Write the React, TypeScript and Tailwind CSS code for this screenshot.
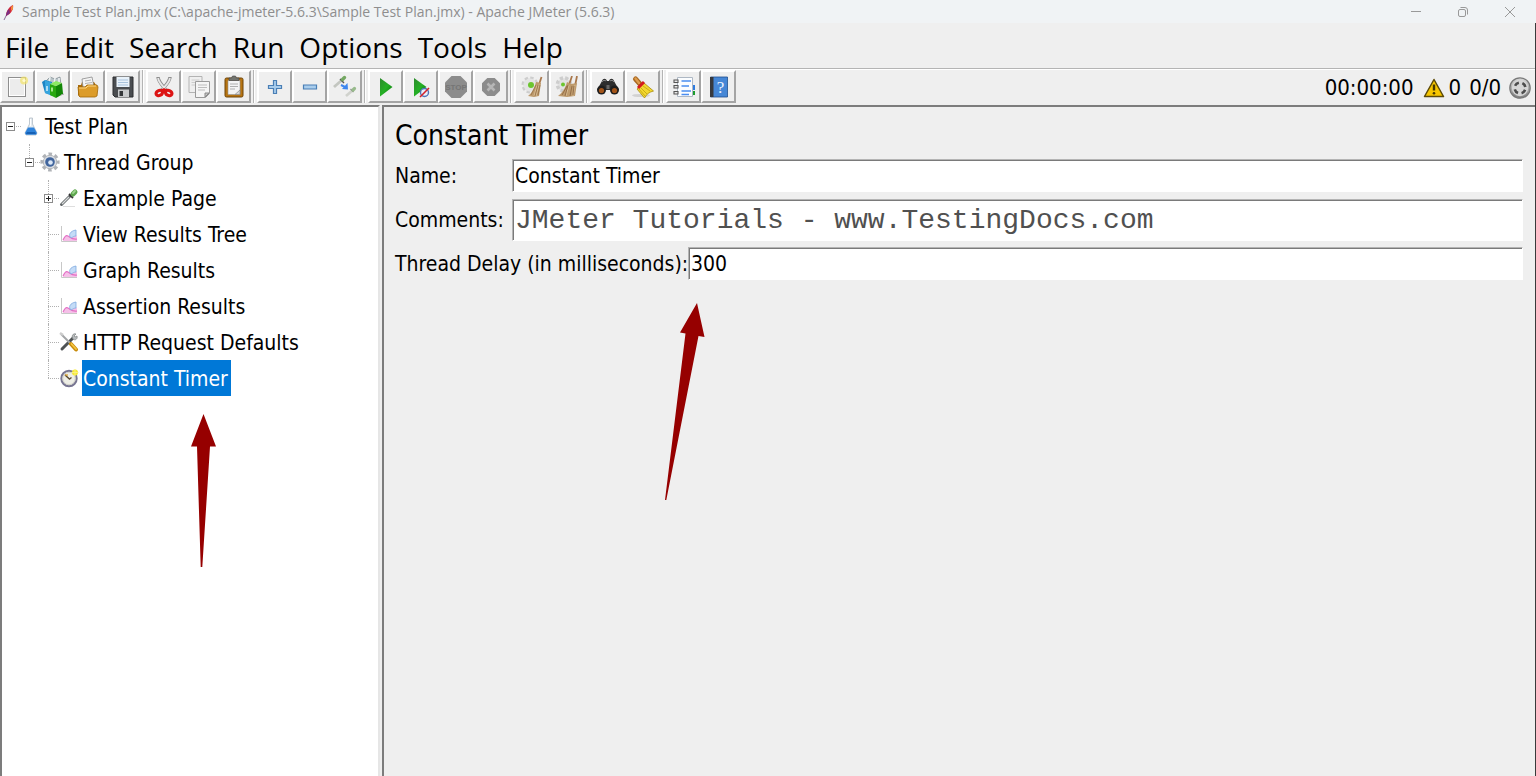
import type { ReactNode } from 'react';
import clsx from 'clsx';

type TreeRow = {
  label: string;
  level: number;
  icon: ReactNode;
  expander?: 'open' | 'closed';
  last?: boolean;
  selected?: boolean;
};

type ToolItem = { name: string; icon: ReactNode };

const menus = ['File', 'Edit', 'Search', 'Run', 'Options', 'Tools', 'Help'];

const treeRows: TreeRow[] = [
  { label: 'Test Plan', level: 0, icon: <FlaskIcon />, expander: 'open' },
  { label: 'Thread Group', level: 1, icon: <GearIcon />, expander: 'open', last: true },
  { label: 'Example Page', level: 2, icon: <DropperIcon />, expander: 'closed' },
  { label: 'View Results Tree', level: 2, icon: <ChartIcon /> },
  { label: 'Graph Results', level: 2, icon: <ChartIcon /> },
  { label: 'Assertion Results', level: 2, icon: <ChartIcon /> },
  { label: 'HTTP Request Defaults', level: 2, icon: <ToolsIcon /> },
  { label: 'Constant Timer', level: 2, icon: <ClockIcon />, last: true, selected: true },
];

const indents = ['pl-1', 'pl-[23px]', 'pl-[42px]'];

const toolGroups: ToolItem[][] = [
  [
    { name: 'New', icon: <NewIcon /> },
    { name: 'Templates', icon: <TemplatesIcon /> },
    { name: 'Open', icon: <OpenIcon /> },
    { name: 'Save', icon: <SaveIcon /> },
  ],
  [
    { name: 'Cut', icon: <CutIcon /> },
    { name: 'Copy', icon: <CopyIcon /> },
    { name: 'Paste', icon: <PasteIcon /> },
  ],
  [
    { name: 'Expand All', icon: <PlusIcon /> },
    { name: 'Collapse All', icon: <MinusIcon /> },
    { name: 'Toggle', icon: <ToggleIcon /> },
  ],
  [
    { name: 'Start', icon: <StartIcon /> },
    { name: 'Start no pauses', icon: <StartNoPauseIcon /> },
    { name: 'Stop', icon: <StopIcon /> },
    { name: 'Shutdown', icon: <ShutdownIcon /> },
  ],
  [
    { name: 'Clear', icon: <ClearIcon /> },
    { name: 'Clear All', icon: <ClearAllIcon /> },
  ],
  [
    { name: 'Search', icon: <BinocularsIcon /> },
    { name: 'Reset Search', icon: <BroomIcon /> },
  ],
  [
    { name: 'Function Helper', icon: <ListIcon /> },
    { name: 'Help', icon: <HelpIcon /> },
  ],
];

export default function App() {
  return (
    <div className="flex min-h-screen flex-col overflow-hidden bg-[#efefef] font-['DejaVu_Sans_Condensed','Noto_Sans',sans-serif] text-black">
      <TitleBar />
      <div className="flex flex-1 flex-col border-r border-[#3a3a3a]">
        <nav className="flex h-[46px] items-center gap-[15px] border-b border-[#b4b4b4] pt-[2px] pl-[5px] font-['Open_Sans',sans-serif] text-[28px]">
          {menus.map((m) => (
            <button key={m} type="button">
              {m}
            </button>
          ))}
        </nav>
        <Toolbar />
        <div className="flex flex-1">
          <TestTree />
          <TimerPanel />
        </div>
      </div>
    </div>
  );
}

function TitleBar() {
  return (
    <header className="flex h-[23px] items-center justify-between bg-[#f0f3f5] text-[#8e8e8e]">
      <div className="flex items-center gap-[6px] pl-[2px] font-['Open_Sans',sans-serif] text-[14px]">
        <svg width="14" height="18" viewBox="0 0 14 18">
          <path d="M2 17 5 11" stroke="#8a6a9a" strokeWidth="1" />
          <path d="M4 13C4 8 7 4 11 2c1 4-2 9-7 11Z" fill="#d22a3c" />
          <path d="M4 13C4 10 5 8 7 6l1 4c-1 1-2 2-4 3Z" fill="#7b2f86" />
          <path d="M9 4l2-2v4l-2 2Z" fill="#f08a3c" />
        </svg>
        <span>Sample Test Plan.jmx (C:\apache-jmeter-5.6.3\Sample Test Plan.jmx) - Apache JMeter (5.6.3)</span>
      </div>
      <div className="flex gap-[35px] pr-5">
        <button type="button" aria-label="Minimize">
          <svg width="12" height="12" viewBox="0 0 12 12" stroke="#999" fill="none">
            <path d="M1 5.500h10" />
          </svg>
        </button>
        <button type="button" aria-label="Restore">
          <svg width="12" height="12" viewBox="0 0 12 12" stroke="#999" fill="none">
            <rect x="1.500" y="3.500" width="7" height="7" rx="1.500" />
            <path d="M3.500 1.500H8a2.500 2.500 0 0 1 2.500 2.500v4.500" />
          </svg>
        </button>
        <button type="button" aria-label="Close">
          <svg width="12" height="12" viewBox="0 0 12 12" stroke="#999" fill="none">
            <path d="m1 1 10 10M11 1 1 11" />
          </svg>
        </button>
      </div>
    </header>
  );
}

function Toolbar() {
  return (
    <div className="flex h-[36px] items-start justify-between border-t border-white pr-1">
      <div className="flex gap-[6px]">
        {toolGroups.map((group, i) => (
          <div
            key={i}
            className="relative flex after:absolute after:top-0 after:-right-[4px] after:h-[33px] after:w-[2px] after:border-l after:border-[#b4b4b4] after:bg-white last:after:hidden"
          >
            {group.map((t) => (
              <button
                key={t.name}
                type="button"
                aria-label={t.name}
                className="flex h-[33px] w-[35px] items-center justify-center border-t-2 border-r-2 border-b-2 border-l-2 border-t-white border-r-[#a4a4a4] border-b-[#a4a4a4] border-l-white"
              >
                {t.icon}
              </button>
            ))}
          </div>
        ))}
      </div>
      <div className="flex items-center pt-[2px] text-[22px] leading-8">
        <span>00:00:00</span>
        <button type="button" aria-label="Show log" className="ml-[9px] flex items-center gap-1">
          <svg width="22" height="20" viewBox="0 0 22 20">
            <path d="M11 1.500 20.500 18.500h-19Z" fill="#f7c600" stroke="#5c4a08" strokeWidth="1.500" strokeLinejoin="round" />
            <path d="M11 6.500v6" stroke="#4a3900" strokeWidth="2.400" />
            <circle cx="11" cy="15.300" r="1.300" fill="#4a3900" />
          </svg>
          0
        </button>
        <span className="mr-[8px] ml-[8px]">0/0</span>
        <svg width="22" height="22" viewBox="0 0 22 22">
          <defs>
            <linearGradient id="ball" x1="0" y1="0" x2="0" y2="1">
              <stop offset="0" stopColor="#d8d8d8" />
              <stop offset="1" stopColor="#7e7e7e" />
            </linearGradient>
          </defs>
          <circle cx="11" cy="11" r="10.200" fill="url(#ball)" stroke="#777" strokeWidth="1.200" />
          <circle cx="11" cy="11" r="8.200" fill="#d6d6d6" />
          <circle cx="11" cy="11" r="5.400" fill="none" stroke="#4c4c4c" strokeWidth="2.600" strokeDasharray="4.800 3.682" strokeDashoffset="-1.841" />
        </svg>
      </div>
    </div>
  );
}

function TestTree() {
  return (
    <aside className="w-[380px] shrink-0 border-t-2 border-r-2 border-l-2 border-t-[#7c7c7c] border-r-[#e6e6e6] border-l-[#7c7c7c] bg-white pt-px">
      <ul>
        {treeRows.map((row) => (
          <li key={row.label} className={clsx('flex h-9 items-center text-[21px]', indents[row.level])}>
            <span className="relative flex h-9 w-[15px] shrink-0 items-center">
              {row.level > 0 && (
                <span
                  className={clsx(
                    'absolute top-0 left-1 border-l border-dotted border-[#b0b0b0]',
                    row.last ? 'h-[18px]' : 'h-9',
                  )}
                />
              )}
              <span className="absolute top-[18px] right-0 left-1 border-t border-dotted border-[#b0b0b0]" />
              {row.expander && (
                <button
                  type="button"
                  aria-label={row.expander === 'open' ? `Collapse ${row.label}` : `Expand ${row.label}`}
                  className="relative bg-white"
                >
                  <svg width="9" height="9" viewBox="0 0 9 9" fill="none">
                    <rect x=".5" y=".5" width="8" height="8" stroke="#8c8c8c" />
                    <path d={row.expander === 'open' ? 'M2 4.500h5' : 'M2 4.500h5M4.500 2v5'} stroke="#222" />
                  </svg>
                </button>
              )}
            </span>
            <span className="flex w-5 shrink-0 justify-center">{row.icon}</span>
            <button
              type="button"
              className={clsx(
                'ml-[3px] h-9 pt-[3px] pr-[3px] pl-px whitespace-nowrap',
                row.selected && 'bg-[#0078d7] text-white',
              )}
            >
              {row.label}
            </button>
          </li>
        ))}
      </ul>
      <svg className="pointer-events-none absolute top-[414px] left-[190px]" width="28" height="154" viewBox="0 0 28 154">
        <path d="M13.500 0 26 32.500H20L12.300 153h-1.600L7 32.500H1Z" fill="#960000" />
      </svg>
    </aside>
  );
}

const field =
  'min-w-0 flex-1 border border-t-[#b4b4b4] border-r-white border-b-white border-l-[#b4b4b4] bg-white pt-[2px] pl-[2px] shadow-[inset_1px_1px_#7a7a7a] outline-none';

function TimerPanel() {
  return (
    <main className="ml-[2px] min-w-0 flex-1 border-t-2 border-l-2 border-[#7c7c7c] pt-[10px] pr-3 pl-[11px] text-[21px]">
      <h1 className="h-[42px] text-[28px] leading-[38px]">Constant Timer</h1>
      <div className="flex h-[33px] items-stretch">
        <label htmlFor="name" className="w-[117px] shrink-0 self-center pt-[2px]">
          Name:
        </label>
        <input id="name" className={field} defaultValue="Constant Timer" />
      </div>
      <div className="mt-[7px] flex h-[42px] items-stretch">
        <label htmlFor="comments" className="w-[117px] shrink-0 self-center pt-[2px]">
          Comments:
        </label>
        <input
          id="comments"
          className={clsx(field, "font-['Liberation_Mono',monospace] text-[28px] text-[#505050]")}
          defaultValue="JMeter Tutorials - www.TestingDocs.com"
        />
      </div>
      <div className="mt-[6px] flex h-[33px] items-stretch">
        <label htmlFor="delay" className="w-[293px] shrink-0 self-center pt-[2px] whitespace-nowrap">
          Thread Delay (in milliseconds):
        </label>
        <input id="delay" className={field} defaultValue="300" />
      </div>
      <svg className="pointer-events-none absolute top-[302px] left-[664px]" width="42" height="200" viewBox="0 0 42 200">
        <path d="M33 1 40.500 35 34.500 34 2.300 198H1L21.500 31.500 16 30.500Z" fill="#960000" />
      </svg>
    </main>
  );
}

// Toolbar icons

function NewIcon() {
  return (
    <svg width="22" height="22" viewBox="0 0 22 22">
      <rect x="1.500" y="1.500" width="17" height="19" fill="#ececec" stroke="#8f8f8f" />
      <rect x="2.500" y="2.500" width="15" height="17" fill="none" stroke="#fff" />
      <circle cx="17" cy="4.500" r="4" fill="#f4e46a" opacity=".7" />
      <circle cx="17" cy="4.500" r="1.600" fill="#fffbd0" />
    </svg>
  );
}

function TemplatesIcon() {
  return (
    <svg width="24" height="24" viewBox="0 0 24 24">
      <path d="m5 6 4-4 5 2 5-2 1 8H6Z" fill="#b9c4c8" stroke="#7d8a8f" strokeWidth=".7" />
      <path d="M9 2 8 8m6-5-1 6m5-6v6" stroke="#eef3f4" strokeWidth="1.500" />
      <path d="m1 7 3-2 7 2v13l-7-2Z" fill="#1d84c4" />
      <path d="M4 5v13l7 3V8Z" fill="#36a4dd" />
      <path d="M6 11v5" stroke="#d7f0fc" strokeWidth="1.500" />
      <path d="m9 9 6 2v12l-6-3Z" fill="#29a80f" />
      <path d="m15 11 6-3 1 11-7 4Z" fill="#128707" />
      <path d="m9 9 6-3 6 2-6 3Z" fill="#8cea62" />
      <path d="M11 12.500v4" stroke="#c5f5ad" strokeWidth="1.600" />
      <path d="m20 20 3-1" stroke="#aaa" />
    </svg>
  );
}

function OpenIcon() {
  return (
    <svg width="22" height="22" viewBox="0 0 22 22">
      <path d="M1 9h3l1-3h12l2 3v10l-2 2H3l-2-2Z" fill="#a86b0c" />
      <path d="M5 3 15 1l2 10H6Z" fill="#f4f4f4" stroke="#8b8b8b" strokeWidth=".8" />
      <path d="m8 5 6-1M8 7.500l7-1" stroke="#aaa" strokeWidth=".9" />
      <path d="M1 11h7l2-2h10l1 2-1 9-2 1H3l-1-1Z" fill="#dc9c2a" stroke="#a16708" strokeWidth=".8" />
      <path d="M2 12h7l2-2h8" fill="none" stroke="#ffd680" />
    </svg>
  );
}

function SaveIcon() {
  return (
    <svg width="22" height="22" viewBox="0 0 22 22">
      <path d="M1 1h20v20H3l-2-2Z" fill="#4a4d50" stroke="#2d2f31" />
      <path d="M4.500 1h13v10h-13Z" fill="#e9f2fa" />
      <path d="M6 4h10M6 6.500h10M6 9h10" stroke="#a9c3dc" />
      <rect x="6" y="13.500" width="11" height="7.500" fill="#c9cbcc" />
      <rect x="7.500" y="15" width="3.500" height="5" fill="#35383a" />
    </svg>
  );
}

function CutIcon() {
  return (
    <svg width="22" height="22" viewBox="0 0 22 22" fill="none">
      <path d="M5 1c0 4 4 8 8 13M17 1c0 4-4 8-8 13" stroke="#8d8d8d" strokeWidth="3.400" />
      <path d="M5.200 2c0 4 4 7 7.600 12M16.800 2c0 4-4 7-7.600 12" stroke="#e7e7e7" strokeWidth="1.800" />
      <ellipse cx="6.300" cy="17" rx="3.400" ry="2.500" stroke="#dc1414" strokeWidth="3.200" transform="rotate(-28 6.300 17)" />
      <ellipse cx="15.700" cy="17" rx="3.400" ry="2.500" stroke="#dc1414" strokeWidth="3.200" transform="rotate(28 15.700 17)" />
      <path d="m7 14 4-2 4 2-4 3Z" fill="#dc1414" />
    </svg>
  );
}

function CopyIcon() {
  return (
    <svg width="22" height="22" viewBox="0 0 22 22">
      <path d="M1 .500h13v16H1Z" fill="#efefef" stroke="#b3b3b3" />
      <path d="M3.500 4h8M3.500 6.500h4M3.500 9h4" stroke="#ccc" />
      <path d="M7.500 5.500h14v12l-4 4h-10Z" fill="#f5f5f5" stroke="#9a9a9a" />
      <path d="M21 17h-4v4Z" fill="#c8c8c8" stroke="#888" />
      <path d="M10 9h9M10 11.500h9M10 14h7" stroke="#bdbdbd" />
    </svg>
  );
}

function PasteIcon() {
  return (
    <svg width="22" height="24" viewBox="0 0 22 24">
      <rect x="2" y="3" width="18" height="19" rx="1.500" fill="#b77411" stroke="#6e4408" />
      <path d="M5 5.500h12v14H5Z" fill="#f4f4f4" stroke="#999" strokeWidth=".6" />
      <path d="M6 5.500V3h2.500l1-2h3l1 2H16v2.500Z" fill="#73756f" stroke="#444" strokeWidth=".6" />
      <path d="M7 9h8M7 11.500h8M7 14h5" stroke="#b0b0b0" />
      <path d="M17 15v4.500h-5Z" fill="#d6d6d6" stroke="#888" strokeWidth=".7" />
    </svg>
  );
}

function PlusIcon() {
  return (
    <svg width="16" height="16" viewBox="0 0 16 16">
      <path d="M6.500 1.500h3v5h5v3h-5v5h-3v-5h-5v-3h5Z" fill="#a9cdec" stroke="#4a7fb5" strokeWidth="1.200" />
    </svg>
  );
}

function MinusIcon() {
  return (
    <svg width="16" height="16" viewBox="0 0 16 16">
      <path d="M1.500 6h13v4h-13Z" fill="#a9cdec" stroke="#4a7fb5" strokeWidth="1.200" />
    </svg>
  );
}

function ToggleIcon() {
  return (
    <svg width="24" height="24" viewBox="0 0 24 24" fill="none">
      <path d="m1 12 8-7" stroke="#c3c6c0" strokeWidth="2.800" />
      <path d="m7 4 4 4" stroke="#555" strokeWidth="1.400" />
      <path d="m9.500 4.500 2-2" stroke="#74a862" strokeWidth="3.400" strokeLinecap="round" />
      <path d="m13 21 7-6" stroke="#d0d2cd" strokeWidth="2.600" />
      <path d="m17.500 14 3 3" stroke="#8d8f8b" strokeWidth="1.200" />
      <path d="m20 15 1.500-1.500" stroke="#98bb8c" strokeWidth="3.200" strokeLinecap="round" />
      <path d="m8 10 4 2" stroke="#3d86ee" strokeWidth="2" />
      <path d="m14.500 8 .5 6.500-6-.5Z" fill="#3d86ee" />
    </svg>
  );
}

function StartIcon() {
  return (
    <svg width="22" height="22" viewBox="0 0 22 22">
      <defs>
        <linearGradient id="play" x1="0" y1="0" x2="1" y2="1">
          <stop offset="0" stopColor="#2c8a2c" />
          <stop offset=".5" stopColor="#25b025" />
          <stop offset="1" stopColor="#067006" />
        </linearGradient>
      </defs>
      <path d="M5 2 17.500 11 5 20.500Z" fill="url(#play)" />
    </svg>
  );
}

function StartNoPauseIcon() {
  return (
    <svg width="22" height="22" viewBox="0 0 22 22">
      <path d="M4 2 16.500 11 4 20.500Z" fill="url(#play)" />
      <circle cx="14.500" cy="16.500" r="4" fill="#e9eef8" stroke="#4d74b8" strokeWidth="1.400" />
      <path d="m10 21 9-9" stroke="#d3222a" strokeWidth="1.600" />
    </svg>
  );
}

function StopIcon() {
  return (
    <svg width="24" height="24" viewBox="0 0 24 24">
      <path d="M7.500 1h9L23 7.500v9L16.500 23h-9L1 16.500v-9Z" fill="#8c8c8c" />
      <text x="12" y="15" textAnchor="middle" fontSize="8" fontWeight="700" fill="#757575" fontFamily="Liberation Sans">
        STOP
      </text>
    </svg>
  );
}

function ShutdownIcon() {
  return (
    <svg width="20" height="20" viewBox="0 0 20 20">
      <path d="M6.300 1h7.400L19 6.300v7.400L13.700 19H6.300L1 13.700V6.300Z" fill="#8c8c8c" />
      <path d="m6.500 6.500 7 7m0-7-7 7" stroke="#b6b6b6" strokeWidth="2.600" />
    </svg>
  );
}

function ClearIcon() {
  return (
    <svg width="22" height="22" viewBox="0 0 22 22">
      <circle cx="9" cy="9" r="6.800" fill="#e2e2e2" stroke="#cdcdcd" strokeWidth="3.400" strokeDasharray="3.200 2.140" />
      <circle cx="9" cy="9" r="6.500" fill="#e4e4e4" />
      <path d="m20.500 1-3 9" stroke="#a9774b" strokeWidth="1.800" />
      <path d="m15 6 5 1-2 13-5 1-6-1c4-3 6-7 8-14Z" fill="#bd9a6c" />
      <path d="m16 9-3 11m5-11.500L15 20" stroke="#d8bd95" strokeWidth=".9" />
      <path d="m15 9-5 10M17 9l-3 11m5-11-2 10" stroke="#8f6a42" strokeWidth=".7" />
      <circle cx="10" cy="9" r="3" fill="#6cc52f" />
    </svg>
  );
}

function ClearAllIcon() {
  return (
    <svg width="24" height="22" viewBox="0 0 24 22">
      <circle cx="9" cy="8.500" r="6.600" fill="#e2e2e2" stroke="#cdcdcd" strokeWidth="3.400" strokeDasharray="3.200 2.140" />
      <path d="m17 0-3 9m8-9-2 10" stroke="#a9774b" strokeWidth="1.800" />
      <path d="m12 6 4 2 6-1-2 13-8 1-9-1c4-3 7-7 9-14Z" fill="#bd9a6c" />
      <path d="m14 9-3 11m9-11-2 11" stroke="#d8bd95" strokeWidth=".9" />
      <path d="M12 10 7 19m6-10-3 11m7-10-2 10m4-10-1 9" stroke="#8a633f" strokeWidth=".8" />
      <circle cx="8" cy="8.500" r="2" fill="#6cc52f" />
    </svg>
  );
}

function BinocularsIcon() {
  return (
    <svg width="24" height="20" viewBox="0 0 24 20">
      <path d="M6 4c1-3 4-3 5 0h2c1-3 4-3 5 0l5 9H1Z" fill="#2d2d2d" />
      <path d="M6 5c1-2 3-2 4-1M14 4c1-1 3-1 4 1" stroke="#8a8a8a" fill="none" />
      <circle cx="5.500" cy="13" r="4.500" fill="#1e1e1e" />
      <circle cx="18.500" cy="13" r="4.500" fill="#1e1e1e" />
      <circle cx="5.500" cy="13.500" r="2.600" fill="#a35418" />
      <circle cx="18.500" cy="13.500" r="2.600" fill="#a35418" />
      <path d="M10.500 8h3v4h-3Z" fill="#666" />
    </svg>
  );
}

function BroomIcon() {
  return (
    <svg width="24" height="24" viewBox="0 0 24 24">
      <ellipse cx="10" cy="20.500" rx="9" ry="1.600" fill="#d2d2d2" />
      <path d="M4.500 4 9 9" stroke="#a96820" strokeWidth="5" strokeLinecap="round" />
      <path d="M4.500 3.500 8 8" stroke="#dd9c4d" strokeWidth="2.400" strokeLinecap="round" />
      <path d="m13 8 9.500 8c-4 1-7 3-9 7L6 14Z" fill="#f3d92f" stroke="#a98d0c" strokeWidth=".8" />
      <path d="m12 11 7 5m-9-3 6 6m-8-5 6 7" stroke="#bfa013" strokeWidth=".8" />
      <path d="m7 13 6-6" stroke="#d41c1c" strokeWidth="3" />
    </svg>
  );
}

function ListIcon() {
  return (
    <svg width="24" height="22" viewBox="0 0 24 22">
      <path d="M19 9h4v5h-4Z" fill="#2d7be0" />
      <path d="M19 15h4v4h-4Z" fill="#1d9b2f" />
      <path d="M5.500 1.500h15v19h-15Z" fill="#fbfdff" stroke="#aeb8c4" />
      <path d="M9.500 5H19M9.500 10H17M9.500 15H19M9.500 18.500H17" stroke="#4a8df0" strokeWidth="1.600" />
      <path d="M2 4h4v2.500H2ZM2 9.500h4V12H2ZM2 15.500h4V18H2Z" fill="#e8e8e8" stroke="#555" strokeWidth="1.100" />
    </svg>
  );
}

function HelpIcon() {
  return (
    <svg width="20" height="22" viewBox="0 0 20 22">
      <path d="M1.500 1h17v20h-17Z" fill="#4687d6" stroke="#1f4f8f" strokeWidth=".8" />
      <path d="M1 1h3.500v20H1Z" fill="#37393d" />
      <text x="11.500" y="16.500" textAnchor="middle" fontSize="17" fill="#eaf3ff" fontFamily="Liberation Serif">
        ?
      </text>
    </svg>
  );
}

// Tree icons

function FlaskIcon() {
  return (
    <svg width="16" height="20" viewBox="0 0 16 20">
      <path d="M6.500 2h3v6l4.500 9-1 2H3l-1-2 4.500-9Z" fill="#e3eaf0" stroke="#b3bcc5" strokeWidth=".8" />
      <path d="m5 11.500 6 0 3 5.500-1 1.800H3L2 17Z" fill="#2f83db" />
      <path d="M4 16h8l1 2H3Z" fill="#1661b5" />
      <path d="M7.500 3v7" stroke="#fff" />
    </svg>
  );
}

function GearIcon() {
  return (
    <svg width="20" height="20" viewBox="0 0 20 20">
      <circle cx="10" cy="10" r="7.800" fill="none" stroke="#b0b3b7" strokeWidth="3.600" strokeDasharray="3.400 2.726" strokeDashoffset="1.700" />
      <circle cx="10" cy="10" r="6.800" fill="#d9dce0" stroke="#a9adb2" strokeWidth=".8" />
      <circle cx="10" cy="10" r="4.800" fill="#41659d" />
      <circle cx="10.500" cy="10.500" r="2.300" fill="#dbe7f6" />
    </svg>
  );
}

function DropperIcon() {
  return (
    <svg width="20" height="20" viewBox="0 0 20 20" fill="none">
      <path d="M4 18.500h12" stroke="#dedede" />
      <path d="m2.500 16.500 8.500-8.500" stroke="#63686a" strokeWidth="3" strokeLinecap="round" />
      <path d="m3 16 7-7" stroke="#d9dcdc" strokeWidth="1.300" />
      <path d="m10 6 4 4" stroke="#333" strokeWidth="1.800" />
      <path d="m14 6 2-2" stroke="#5fa64f" strokeWidth="5" strokeLinecap="round" />
      <path d="m14 5 2-2" stroke="#9fd58f" strokeWidth="1.800" strokeLinecap="round" />
    </svg>
  );
}

function ChartIcon() {
  return (
    <svg width="18" height="18" viewBox="0 0 18 18">
      <path d="M3 16c1-4 3-6 5-5s3-2 5-3l4 3v5Z" fill="#f5c0e8" />
      <path d="M3 15c2-4 3-5 5-4s4 4 9 3" fill="none" stroke="#e36cc3" strokeWidth="1.200" />
      <path d="M11 13c-3-3-1-7 5-8v6c-2 0-3 1-5 2Z" fill="#c4dcf7" stroke="#7faae0" strokeWidth=".8" />
      <path d="M1.500 1v15.500H17" fill="none" stroke="#c8c8c8" />
    </svg>
  );
}

function ToolsIcon() {
  return (
    <svg width="20" height="20" viewBox="0 0 20 20" fill="none">
      <path d="m3 17 11-11" stroke="#4e5254" strokeWidth="3" strokeLinecap="round" />
      <path d="M14 7c-2-3 0-6 3-5l-2 2 1 1 2-1c1 3-2 5-4 3Z" fill="#b8bcbe" stroke="#7e8284" strokeWidth=".7" />
      <path d="m2 2 9 9" stroke="#a2a5a7" strokeWidth="2" />
      <path d="m1 1 3 2" stroke="#ccc" strokeWidth="2.400" />
      <path d="m12 12 5 5.500" stroke="#c78b0b" strokeWidth="4" strokeLinecap="round" />
      <path d="m12.500 12 4.500 5" stroke="#f6c642" strokeWidth="1.800" strokeLinecap="round" />
    </svg>
  );
}

function ClockIcon() {
  return (
    <svg width="20" height="20" viewBox="0 0 20 20" fill="none">
      <circle cx="10" cy="10.500" r="7.700" fill="#eeeee6" stroke="#777591" strokeWidth="2" />
      <circle cx="10" cy="10.500" r="6.200" stroke="#c9c9c2" strokeWidth=".8" />
      <path d="m6 7 4.500 4 2-1.500" stroke="#5a4a30" strokeWidth="1.400" />
      <path d="m6 7 3 0" stroke="#d89b20" strokeWidth="1.200" />
      <circle cx="16" cy="4.500" r="3" fill="#f7ea32" />
      <path d="M16 1v7M12.500 4.500h7" stroke="#f9f08a" strokeWidth=".9" />
    </svg>
  );
}
